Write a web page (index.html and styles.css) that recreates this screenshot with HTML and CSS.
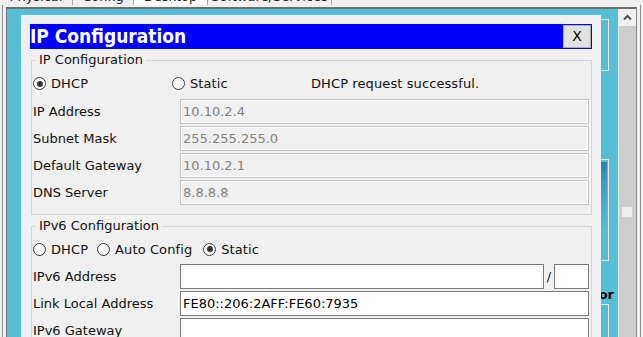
FILE: index.html
```html
<!DOCTYPE html>
<html>
<head>
<meta charset="utf-8">
<link rel="stylesheet" href="styles.css">
</head>
<body>
<div class="tabs">
  <div class="tab t1"><span>Physical</span></div>
  <div class="tab t2"><span>Config</span></div>
  <div class="tab t3 selected"><span>Desktop</span></div>
  <div class="tab t4"><span>Software/Services</span></div>
</div>
<div class="frame">
  <div class="pane">
    <div class="desktop">
      <div class="deco rect-a"></div>
      <div class="deco rect-b"></div>
      <div class="deco icon-b"></div>
      <div class="deco label-c">Text Editor</div>
      <div class="deco rect-c"></div>
      <div class="window">
        <div class="titlebar">
          <span class="title">IP Configuration</span>
          <div class="close">X</div>
        </div>
        <fieldset class="group g4">
          <legend>IP Configuration</legend>
          <div class="radios radios4">
            <label class="radio"><span class="dot on"></span>DHCP</label>
            <label class="radio"><span class="dot"></span>Static</label>
            <span class="msg">DHCP request successful.</span>
          </div>
          <div class="rows">
            <span class="lbl">IP Address</span><input class="field off" value="10.10.2.4" disabled>
            <span class="lbl">Subnet Mask</span><input class="field off" value="255.255.255.0" disabled>
            <span class="lbl">Default Gateway</span><input class="field off" value="10.10.2.1" disabled>
            <span class="lbl">DNS Server</span><input class="field off" value="8.8.8.8" disabled>
          </div>
        </fieldset>
        <fieldset class="group g6">
          <legend>IPv6 Configuration</legend>
          <div class="radios radios6">
            <label class="radio r-dhcp"><span class="dot"></span>DHCP</label>
            <label class="radio r-auto"><span class="dot"></span>Auto Config</label>
            <label class="radio"><span class="dot on"></span>Static</label>
          </div>
          <div class="rows">
            <span class="lbl">IPv6 Address</span>
            <div class="addr"><input class="field on grow" value=""><span class="slash">/</span><input class="field on prefix" value=""></div>
            <span class="lbl">Link Local Address</span><input class="field on" value="FE80::206:2AFF:FE60:7935">
            <span class="lbl">IPv6 Gateway</span><input class="field on" value="">
          </div>
        </fieldset>
      </div>
    </div>
    <div class="scrollbar">
      <div class="arrow">
        <svg width="9" height="7" viewBox="0 0 9 7"><polyline points="1,5.5 4.5,2 8,5.5" fill="none" stroke="#505050" stroke-width="2"/></svg>
      </div>
      <div class="track"><div class="thumb"></div></div>
    </div>
  </div>
</div>
</body>
</html>
```
FILE: styles.css
```css
html, body {
  margin: 0;
  height: 337px;
  overflow: hidden;
  background: #f0f0f0;
  font-family: "DejaVu Sans", sans-serif;
  font-size: 13px;
  color: #111;
}

.tabs {
  display: flex;
  height: 5px;
  overflow: hidden;
}
.tab {
  box-sizing: border-box;
  height: 5px;
  border-right: 1px solid #a9a9a9;
  text-align: center;
  color: #222;
  background: #f0f0f0;
}
.tab span {
  display: block;
  margin-top: -10px;
  line-height: 13px;
}
.t1 { width: 73px; }
.t2 { width: 61px; }
.t3 { width: 74px; }
.t4 { width: 124px; }
.tab.selected { background: #ffffff; }

.frame {
  margin: 0 2px;
  border-left: 1px solid #8e8e8e;
  border-right: 1px solid #8e8e8e;
  padding: 2px 3px 0;
}
.pane {
  display: flex;
  height: 340px;
  border-left: 1px solid #6e6e6e;
  border-top: 2px solid #6e6e6e;
  border-right: 1px solid #8c8c8c;
}
.desktop {
  flex: 1;
  position: relative;
  overflow: hidden;
  background: #56bfd5;
  padding: 6px 0 0 14px;
}

.deco { position: absolute; z-index: 0; }
.rect-a {
  left: 480px; top: 10px; width: 122px; height: 52px;
  box-sizing: border-box;
  border: 1px solid #f3e9d2;
}
.rect-b {
  left: 480px; top: 150px; width: 122px; height: 102px;
  box-sizing: border-box;
  border: 1px solid #f3e9d2;
}
.icon-b {
  left: 590px; top: 153px; width: 10px; height: 70px;
  background: linear-gradient(to bottom, rgba(40,120,180,0.9) 0%, rgba(50,140,195,0.6) 35%, rgba(86,191,213,0) 100%);
}
.rect-c {
  left: 480px; top: 295px; width: 122px; height: 100px;
  box-sizing: border-box;
  border: 1px solid #f3e9d2;
}
.label-c {
  right: 4px; top: 278px;
  font-weight: bold;
  font-size: 13px;
  line-height: 15px;
  color: #000;
}

.window {
  position: relative;
  z-index: 1;
  width: 580px;
  height: 340px;
  box-sizing: border-box;
  background: #f0f0f0;
  padding: 9px;
}
.titlebar {
  height: 25px;
  background: #0000ff;
  display: flex;
  align-items: center;
  justify-content: space-between;
}
.title {
  color: #fff;
  font-family: "DejaVu Sans Condensed", "DejaVu Sans", sans-serif;
  font-stretch: condensed;
  font-weight: bold;
  font-size: 19px;
  line-height: 25px;
}
.close {
  box-sizing: border-box;
  width: 28px;
  height: 23px;
  margin-right: 1px;
  background: #e1e1e1;
  border: 1px solid #adadad;
  color: #000;
  font-size: 14px;
  line-height: 21px;
  text-align: center;
}

.group {
  margin: 3px 0 0 1px;
  padding: 0 2px 9px 0;
  border: 1px solid #d6d6d6;
  min-width: 0;
}
.group legend {
  margin-left: 4px;
  padding: 0 3px;
  line-height: 16px;
  color: #111;
}
.radios {
  display: flex;
  align-items: center;
  padding-left: 1px;
  letter-spacing: 0.1px;
}
.radios4 { height: 31px; }
.radios6 { height: 30px; }
.radio {
  display: flex;
  align-items: center;
}
.radios4 .radio { width: 139px; }
.r-dhcp { margin-right: 9px; }
.r-auto { margin-right: 11px; }
.dot {
  box-sizing: border-box;
  width: 13px;
  height: 13px;
  border: 1px solid #3a3a3a;
  border-radius: 50%;
  background: #fff;
  margin-right: 5px;
  display: flex;
  align-items: center;
  justify-content: center;
}
.dot.on::after {
  content: "";
  width: 6px;
  height: 6px;
  border-radius: 50%;
  background: #333;
}

.rows {
  display: grid;
  grid-template-columns: 148px 409px;
  grid-auto-rows: 25px;
  row-gap: 2px;
}
.lbl {
  display: flex;
  align-items: center;
  padding-left: 1px;
}
.field {
  box-sizing: border-box;
  height: 25px;
  width: 100%;
  margin: 0;
  padding: 0 2px;
  font-family: "DejaVu Sans", sans-serif;
  font-size: 13px;
  outline: none;
}
.field.off {
  background: #f0f0f0;
  border: 1px solid #c4c4c4;
  box-shadow: inset 0 0 0 1px #ffffff;
  color: #838383;
  -webkit-text-fill-color: #838383;
  opacity: 1;
}
.field.on {
  background: #fff;
  border: 1px solid #7a7a7a;
  color: #000;
}
.addr {
  display: flex;
  align-items: center;
}
.grow { flex: 1; width: auto; min-width: 0; }
.slash {
  width: 10px;
  text-align: center;
}
.prefix { width: 35px; flex: none; }

.scrollbar {
  width: 18px;
  display: flex;
  flex-direction: column;
  background: #cdcdcd;
  border-left: 1px solid #e8e8e8;
  box-sizing: border-box;
}
.arrow {
  height: 17px;
  background: #f0f0f0;
  display: flex;
  align-items: center;
  justify-content: center;
}
.track { flex: 1; }
.thumb {
  width: 10px;
  height: 10px;
  margin: 181px 0 0 3px;
  background: #eeeeee;
}
```
